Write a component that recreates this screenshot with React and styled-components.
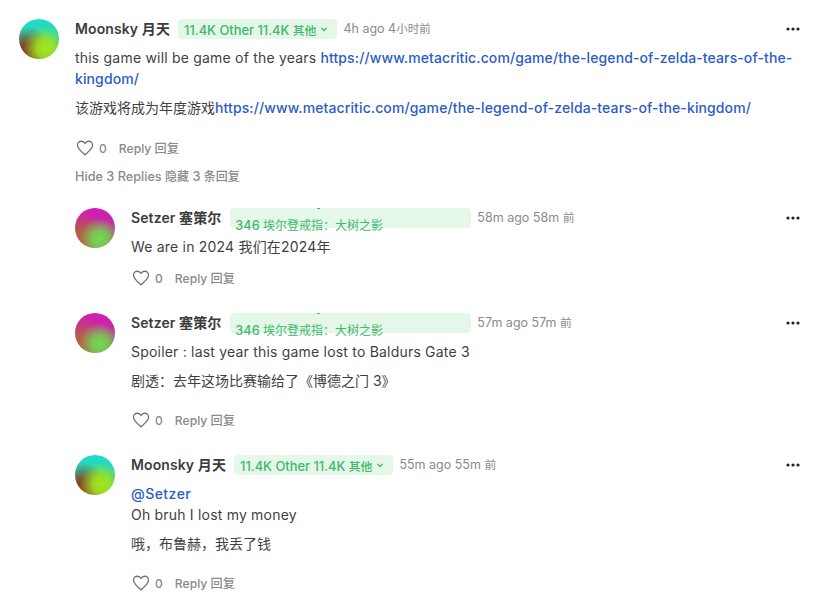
import React from "react";
import styled, { createGlobalStyle } from "styled-components";

const Global = createGlobalStyle`
  html, body { margin: 0; padding: 0; background: #fff; }
  body { font-family: Inter, "Noto Sans CJK SC", sans-serif; color: #3a3a3a; }
`;

const Page = styled.div`
  width: 816px;
  height: 598px;
  overflow: hidden;
  padding: 19px 16px 0 19px;
  box-sizing: border-box;
`;

const Comment = styled.article`
  position: relative;
  display: grid;
  grid-template-columns: 40px 1fr;
  column-gap: 16px;
  margin-top: ${(p) => p.$top || 0}px;
`;

const Replies = styled.div`
  margin-left: 56px;
`;

const Avatar = styled.div`
  width: 40px;
  height: 40px;
  border-radius: 50%;
  background: ${(p) =>
    p.$kind === "magenta"
      ? "radial-gradient(circle at 62% 76%, #6fdc50 0, rgba(111,220,80,.8) 20%, rgba(111,220,80,0) 52%), radial-gradient(circle at 12% 68%, #b8603f 0, rgba(184,96,63,0) 55%), linear-gradient(180deg, #d01fb0 0, #cb24a8 32%, #a8704f 100%)"
      : "radial-gradient(circle at 66% 74%, #a2e81e 0, rgba(162,232,30,.85) 22%, rgba(162,232,30,0) 56%), radial-gradient(circle at 22% 84%, #84401f 0, rgba(132,64,31,.9) 20%, rgba(132,64,31,0) 56%), linear-gradient(180deg, #22dcc4 0, #25d6bd 38%, #4f9a6a 100%)"};
`;

const Main = styled.div`
  min-width: 0;
`;

const Head = styled.header`
  display: flex;
  align-items: flex-start;
  height: 20px;
`;

const Name = styled.span`
  font-size: 14px;
  font-weight: 600;
  line-height: 20px;
  letter-spacing: 0.1px;
  color: #3c3c3c;
  margin-right: ${(p) => p.$gap || 8}px;
`;

const Small = styled.span`
  font-size: ${(p) => p.$size || 11.8}px;
`;

const Badge = styled.span`
  display: inline-flex;
  align-items: center;
  height: 20px;
  padding: 0 8px 0 6px;
  border-radius: 4px;
  background: #e4f7e8;
  color: #3dba6b;
  font-size: 12.9px;
  font-weight: 500;
  white-space: pre;
  margin-right: 6px;
`;

const Chevron = styled.svg`
  width: 10px;
  height: 10px;
  margin-left: 3px;
`;

const TitleBadge = styled.span`
  position: relative;
  display: block;
  width: 241px;
  height: 20px;
  border-radius: 4px;
  background: #e4f7e8;
  color: #3dba6b;
  font-size: 12px;
  line-height: 20px;
  margin-right: 6px;
`;

const TitleText = styled.span`
  position: absolute;
  left: 5px;
  top: 8px;
  white-space: nowrap;
`;

const TitleNumber = styled.span`
  font-size: 12.7px;
  font-weight: 500;
`;

const ClipMark = styled.span`
  position: absolute;
  left: 87px;
  top: 0;
  width: 3px;
  height: 1px;
  background: #3dba6b;
`;

const Time = styled.span`
  font-size: 12.5px;
  line-height: 20px;
  color: #8a8a8a;
  white-space: pre;
`;

const Body = styled.div`
  margin-top: 8px;
  font-size: 14px;
  line-height: 21px;
  color: #3f3f3f;
`;

const Para = styled.p`
  margin: ${(p) => p.$top || 0}px 0 0;
  letter-spacing: ${(p) => (p.$cn ? 0 : 0.2)}px;
`;

const Link = styled.a`
  color: #2c5cc5;
  text-decoration: none;
  font-weight: 450;
  letter-spacing: 0.11px;
`;

const Mention = styled(Link)`
  letter-spacing: 0.45px;
`;

const Actions = styled.div`
  display: flex;
  align-items: center;
  height: 20px;
  margin-top: ${(p) => p.$top ?? 20}px;
  font-size: 12.2px;
  font-weight: 500;
  color: #8a8a8a;
`;

const HeartIcon = styled.svg`
  width: 18px;
  height: 18px;
  margin-left: 1px;
`;

const Count = styled.span`
  margin-left: 5px;
  margin-right: 12px;
  font-size: 12px;
`;

const Toggle = styled.div`
  margin-top: 9px;
  font-size: 12.7px;
  font-weight: 500;
  line-height: 20px;
  color: #8a8a8a;
`;

const More = styled.svg`
  position: absolute;
  top: 8px;
  right: 0;
  width: 14px;
  height: 4px;
`;

const Heart = () => (
  <HeartIcon viewBox="0 0 24 24" fill="none" stroke="#6f6f6f" strokeWidth="1.7" strokeLinejoin="round">
    <path d="M12 21 C7 16.5 2 12.8 2 8.2 C2 5 4.5 3 7.2 3 C9.2 3 11 4 12 6 C13 4 14.8 3 16.8 3 C19.5 3 22 5 22 8.2 C22 12.8 17 16.5 12 21 Z" />
  </HeartIcon>
);

const Dots = () => (
  <More viewBox="0 0 14 4">
    <circle cx="2" cy="2" r="1.6" fill="#222" />
    <circle cx="7" cy="2" r="1.6" fill="#222" />
    <circle cx="12" cy="2" r="1.6" fill="#222" />
  </More>
);

const OtherBadge = () => (
  <Badge>
    <span>11.4K Other 11.4K <Small>其他</Small></span>
    <Chevron viewBox="0 0 10 10">
      <path d="M2.5 4 L5 6.5 L7.5 4" fill="none" stroke="#3dba6b" strokeWidth="1.3" />
    </Chevron>
  </Badge>
);

const RingBadge = () => (
  <TitleBadge>
    <ClipMark />
    <TitleText>
      <TitleNumber>346</TitleNumber> 埃尔登戒指：大树之影
    </TitleText>
  </TitleBadge>
);

const ActionRow = ({ top }) => (
  <Actions $top={top}>
    <Heart />
    <Count>0</Count>
    <span>Reply 回复</span>
  </Actions>
);

const url = "https://www.metacritic.com/game/the-legend-of-zelda-tears-of-the-kingdom/";

export default function App() {
  return (
    <Page>
      <Global />
      <Comment>
        <Avatar />
        <Main>
          <Head>
            <Name>Moonsky 月天</Name>
            <OtherBadge />
            <Time>4h ago 4<Small $size={11.5}>小时前</Small></Time>
          </Head>
          <Body>
            <Para>
              this game will be game of the years <Link href="#">{url}</Link>
            </Para>
            <Para $top={8} $cn>
              该游戏将成为年度游戏<Link href="#">{url}</Link>
            </Para>
          </Body>
          <ActionRow />
          <Toggle>Hide 3 Replies <Small $size={12}>隐藏</Small> 3 <Small $size={12}>条回复</Small></Toggle>
        </Main>
        <Dots />
      </Comment>
      <Replies>
        <Comment $top={21}>
          <Avatar $kind="magenta" />
          <Main>
            <Head>
              <Name $gap={9}>Setzer 塞策尔</Name>
              <RingBadge />
              <Time>58m ago 58m <Small>前</Small></Time>
            </Head>
            <Body>
              <Para>We are in 2024 我们在2024年</Para>
            </Body>
            <ActionRow top={11} />
          </Main>
          <Dots />
        </Comment>
        <Comment $top={25}>
          <Avatar $kind="magenta" />
          <Main>
            <Head>
              <Name $gap={9}>Setzer 塞策尔</Name>
              <RingBadge />
              <Time>57m ago 57m <Small>前</Small></Time>
            </Head>
            <Body>
              <Para>Spoiler : last year this game lost to Baldurs Gate 3</Para>
              <Para $top={8} $cn>剧透：去年这场比赛输给了《博德之门 3》</Para>
            </Body>
            <ActionRow top={19} />
          </Main>
          <Dots />
        </Comment>
        <Comment $top={25}>
          <Avatar />
          <Main>
            <Head>
              <Name>Moonsky 月天</Name>
              <OtherBadge />
              <Time>55m ago 55m <Small>前</Small></Time>
            </Head>
            <Body>
              <Para><Mention href="#">@Setzer</Mention></Para>
              <Para>Oh bruh I lost my money</Para>
              <Para $top={8} $cn>哦，布鲁赫，我丢了钱</Para>
            </Body>
            <ActionRow top={19} />
          </Main>
          <Dots />
        </Comment>
      </Replies>
    </Page>
  );
}
